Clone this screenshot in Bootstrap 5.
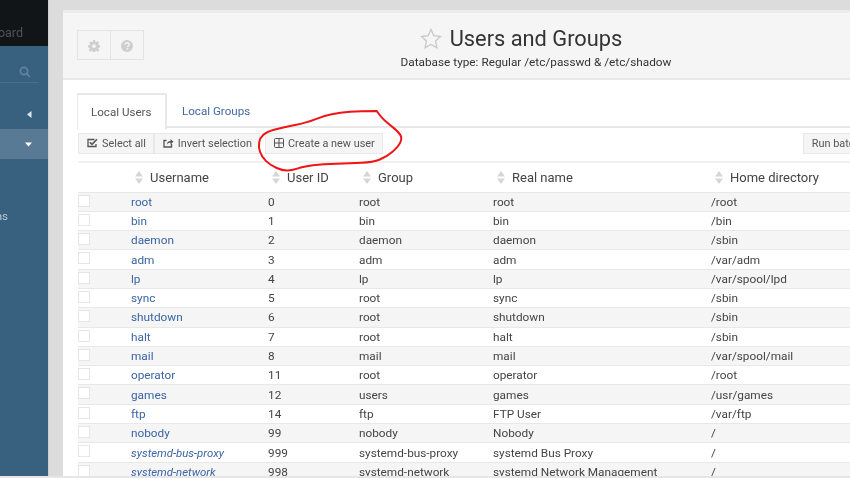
<!DOCTYPE html>
<html lang="en"><head><meta charset="utf-8"><title>Users and Groups</title>
<link rel="stylesheet" href="https://cdn.jsdelivr.net/npm/bootstrap@5.3.0/dist/css/bootstrap.min.css">
<style>
html,body{height:478px;overflow:hidden}
body{background:#dcdcdc;font-family:Roboto,"Liberation Sans",sans-serif;font-size:12px;color:#444;filter:blur(.45px)}
.shell{height:478px;position:relative}
.side{width:48px;flex:none;background:#38607f;box-shadow:1px 0 1px #cfcfcf;overflow:hidden;color:#b9cad8}
.brand{height:46px;background:#111518;color:#4d5359;font-size:12.5px;padding:20px 25px 0 0;white-space:nowrap}
.searchrow{height:37px;margin-right:9px;border-bottom:1px solid #4a7090;padding:16px 8px 0 0}
.sitem{height:30px;padding-right:16px}
.sitem.on{background:#587a95}
.siteml{height:28px;padding-right:40px;font-size:11.5px;white-space:nowrap;margin-top:44px}
.mainwrap{flex:1 1 0;min-width:0;padding:10px 0 0 15px}
.panel{background:#fff;height:468px;border-top:3px solid #ececec;overflow:hidden}
.phead{height:67px;background:#f5f5f5;border-bottom:2px solid #e8e8e8}
.tools{margin:17px 0 0 14px;height:30px}
.tools .btn{width:34px;height:30px;background:#f5f5f5;border:1px solid #e3e3e3;border-radius:0;padding:0;line-height:1}
.titlebox{flex:none;width:784px}
.ttl{font-size:21.8px;font-weight:400;line-height:28px;color:#333;margin:12px 0 0}
.subt{font-size:11.8px;line-height:14px;color:#333;margin-top:2px}
.ttl svg{margin:0 8px 0 -30px;vertical-align:-3px}
.pbody{padding:13px 0 0 14px;width:787px;overflow:hidden}
.nav-tabs{--bs-nav-tabs-border-color:#e8e8e8;--bs-nav-tabs-border-radius:0;border-bottom-width:2px;height:35px;width:780px;font-size:11.6px}
.nav-tabs .nav-link{padding:0 14px;height:36px;line-height:35px;color:#3f68a5;border-width:1px;white-space:nowrap}
.nav-tabs .nav-link.active{color:#555;border-color:#e8e8e8 #e8e8e8 #fff;border-width:2px 2px 0 1px;padding:0 0 0 13px;width:90px}
.bar{margin:5px 0 0 1px;height:21px;white-space:nowrap}
.bar .btn{height:21px;font-size:10.9px;line-height:20px;padding:0 7px 0 8px;color:#555;background:#f5f5f5;border:1px solid #e8e8e8;border-radius:0;flex:none}
.bar .btn svg{margin-right:4px;vertical-align:-1px}
.gapc{margin-left:5px}
.farb{margin-left:420px}
.tablewrap{margin:7px 0 0 1px;border-top:2px solid #f0f0f0}
table.utable{table-layout:fixed;width:772px;margin:0;font-size:11.8px;color:#444;--bs-table-bg:transparent;border-collapse:collapse}
.utable th{font-weight:400;font-size:13px;height:29px;padding:0 0 0 8px;color:#444;border:0;border-bottom:1px solid #e8e8e8;vertical-align:middle}
.utable th svg{margin-right:7px;vertical-align:-2px}
.utable td{height:19.3px;padding:0 0 0 4px;line-height:18px;border:0;border-bottom:1px solid #e8e8e8;vertical-align:middle;white-space:nowrap;color:#444;box-shadow:none}
.utable tbody tr:nth-child(odd) td{background:#f5f5f5}
.utable td:first-child{padding:0;vertical-align:top}
.utable a{color:#3a64a6;text-decoration:none}
.utable i{font-size:11.4px}
.cbx.form-check-input{width:12px;height:12px;margin:2px 0 0;border:1px solid #e6e6e6;border-radius:0;display:block;float:none}
.scribble{position:absolute;left:0;top:0;pointer-events:none}
.foot{position:absolute;left:0;right:0;bottom:0;height:2px;background:#e6e6e6}
</style></head><body>
<div class="shell d-flex">
  <aside class="side d-flex flex-column">
    <div class="brand d-flex align-items-center justify-content-end flex-shrink-0"><span class="flex-shrink-0">Dashboard</span></div>
    <div class="searchrow d-flex align-items-center justify-content-end flex-shrink-0">
      <svg width="12" height="12" viewBox="0 0 12 12" fill="none" stroke="#5f83a0" stroke-width="1.7"><circle cx="5" cy="5" r="3.6"/><path d="M7.800 7.800 11 11"/></svg>
    </div>
    <div class="sitem d-flex align-items-center justify-content-end flex-shrink-0 mt-3"><svg width="5" height="7" viewBox="0 0 5 7"><path d="M4.500 0v7L0 3.500z" fill="#dfe7ee"/></svg></div>
    <div class="sitem on d-flex align-items-center justify-content-end flex-shrink-0"><svg width="7" height="5" viewBox="0 0 7 5"><path d="M0 .5h7L3.500 4.500z" fill="#fff"/></svg></div>
    <div class="siteml d-flex align-items-center justify-content-end flex-shrink-0"><span class="flex-shrink-0">Webmin Actions</span></div>
  </aside>
  <main class="mainwrap">
    <div class="panel">
      <div class="phead d-flex">
        <div class="tools btn-group flex-shrink-0">
          <button class="btn" type="button" aria-label="Settings"><svg width="12" height="12" viewBox="0 0 16 16" fill="#cfcfcf"><path fill-rule="evenodd" d="M6.600 0h2.800l.4 2.200 1.300.6 1.900-1.300 2 2-1.300 1.900.6 1.300 2.200.4v2.800l-2.200.4-.6 1.300 1.300 1.900-2 2-1.900-1.300-1.300.6-.4 2.200H6.600l-.4-2.200-1.300-.6L3 15.500l-2-2 1.300-1.900-.6-1.300L0 9.900V7.100l2.200-.4.6-1.300L1.500 3.500l2-2 1.900 1.300 1.300-.6zM8 5.500a2.500 2.500 0 1 0 0 5 2.500 2.500 0 0 0 0-5z"/></svg></button>
          <button class="btn" type="button" aria-label="Help"><svg width="12" height="12" viewBox="0 0 16 16"><circle cx="8" cy="8" r="8" fill="#cfcfcf"/><path d="M5.300 6.200C5.400 4.500 6.500 3.700 8 3.700c1.600 0 2.800.9 2.800 2.300 0 2-2.300 2-2.300 3.700" fill="none" stroke="#f5f5f5" stroke-width="1.800"/><rect x="7.500" y="10.800" width="2" height="2" fill="#f5f5f5"/></svg></button>
        </div>
        <div class="text-center titlebox">
          <h1 class="ttl"><svg width="22" height="21" viewBox="0 0 22 21" fill="none" stroke="#c8c8c8" stroke-width="1.300"><path d="M11 1.500l2.900 6.200 6.600.8-4.900 4.600 1.300 6.700-5.900-3.300-5.900 3.300 1.300-6.700L1.500 8.500l6.600-.8z"/></svg>Users and Groups</h1>
          <div class="subt">Database type: Regular /etc/passwd &amp; /etc/shadow</div>
        </div>
      </div>
      <div class="pbody">
        <ul class="nav nav-tabs">
          <li class="nav-item"><a class="nav-link active" href="#">Local Users</a></li>
          <li class="nav-item"><a class="nav-link" href="#">Local Groups</a></li>
        </ul>
        <div class="bar d-flex">
          <button class="btn" type="button"><svg width="11" height="10" viewBox="0 0 11 10" fill="none" stroke="#555" stroke-width="1.300"><path d="M9 6v2.500H1v-7h6.500"/><path d="M2.800 4.200 5 6.400 10 1.200" stroke-width="1.600"/></svg>Select all</button>
          <button class="btn" type="button"><svg width="11" height="10" viewBox="0 0 11 10" fill="none" stroke="#555" stroke-width="1.300"><path d="M8.500 6v3H1V2.500h2.500"/><path d="M4 6.500C4 4 5.500 3 7.500 3V1l3 2.800-3 2.700V4.800C6 4.800 5 5.200 4 6.500z" fill="#555" stroke="none"/></svg>Invert selection</button>
          <button class="btn gapc" type="button"><svg width="10" height="10" viewBox="0 0 10 10" fill="none" stroke="#555"><rect x=".5" y=".5" width="9" height="9" rx="1"/><path d="M5 .5v9M.5 5h9"/></svg>Create a new user</button>
          <button class="btn farb" type="button">Run batch file</button>
        </div>
        <div class="tablewrap">
          <table class="table utable">
            <colgroup><col style="width:49px"><col style="width:137px"><col style="width:91px"><col style="width:134px"><col style="width:218px"><col style="width:143px"></colgroup>
            <thead><tr>
              <th></th>
              <th><svg width="8" height="13" viewBox="0 0 8 13" fill="#d6d6d6"><path d="M4 0l4 5.500H0zM4 13l4-5.500H0z"/></svg>Username</th>
              <th><svg width="8" height="13" viewBox="0 0 8 13" fill="#d6d6d6"><path d="M4 0l4 5.500H0zM4 13l4-5.500H0z"/></svg>User ID</th>
              <th><svg width="8" height="13" viewBox="0 0 8 13" fill="#d6d6d6"><path d="M4 0l4 5.500H0zM4 13l4-5.500H0z"/></svg>Group</th>
              <th><svg width="8" height="13" viewBox="0 0 8 13" fill="#d6d6d6"><path d="M4 0l4 5.500H0zM4 13l4-5.500H0z"/></svg>Real name</th>
              <th><svg width="8" height="13" viewBox="0 0 8 13" fill="#d6d6d6"><path d="M4 0l4 5.500H0zM4 13l4-5.500H0z"/></svg>Home directory</th>
            </tr></thead>
            <tbody>
              <tr><td><input class="form-check-input cbx" type="checkbox" aria-label="root"></td><td><a href="#">root</a></td><td>0</td><td>root</td><td>root</td><td>/root</td></tr>
              <tr><td><input class="form-check-input cbx" type="checkbox" aria-label="bin"></td><td><a href="#">bin</a></td><td>1</td><td>bin</td><td>bin</td><td>/bin</td></tr>
              <tr><td><input class="form-check-input cbx" type="checkbox" aria-label="daemon"></td><td><a href="#">daemon</a></td><td>2</td><td>daemon</td><td>daemon</td><td>/sbin</td></tr>
              <tr><td><input class="form-check-input cbx" type="checkbox" aria-label="adm"></td><td><a href="#">adm</a></td><td>3</td><td>adm</td><td>adm</td><td>/var/adm</td></tr>
              <tr><td><input class="form-check-input cbx" type="checkbox" aria-label="lp"></td><td><a href="#">lp</a></td><td>4</td><td>lp</td><td>lp</td><td>/var/spool/lpd</td></tr>
              <tr><td><input class="form-check-input cbx" type="checkbox" aria-label="sync"></td><td><a href="#">sync</a></td><td>5</td><td>root</td><td>sync</td><td>/sbin</td></tr>
              <tr><td><input class="form-check-input cbx" type="checkbox" aria-label="shutdown"></td><td><a href="#">shutdown</a></td><td>6</td><td>root</td><td>shutdown</td><td>/sbin</td></tr>
              <tr><td><input class="form-check-input cbx" type="checkbox" aria-label="halt"></td><td><a href="#">halt</a></td><td>7</td><td>root</td><td>halt</td><td>/sbin</td></tr>
              <tr><td><input class="form-check-input cbx" type="checkbox" aria-label="mail"></td><td><a href="#">mail</a></td><td>8</td><td>mail</td><td>mail</td><td>/var/spool/mail</td></tr>
              <tr><td><input class="form-check-input cbx" type="checkbox" aria-label="operator"></td><td><a href="#">operator</a></td><td>11</td><td>root</td><td>operator</td><td>/root</td></tr>
              <tr><td><input class="form-check-input cbx" type="checkbox" aria-label="games"></td><td><a href="#">games</a></td><td>12</td><td>users</td><td>games</td><td>/usr/games</td></tr>
              <tr><td><input class="form-check-input cbx" type="checkbox" aria-label="ftp"></td><td><a href="#">ftp</a></td><td>14</td><td>ftp</td><td>FTP User</td><td>/var/ftp</td></tr>
              <tr><td><input class="form-check-input cbx" type="checkbox" aria-label="nobody"></td><td><a href="#">nobody</a></td><td>99</td><td>nobody</td><td>Nobody</td><td>/</td></tr>
              <tr><td><input class="form-check-input cbx" type="checkbox" aria-label="systemd-bus-proxy"></td><td><a href="#"><i>systemd-bus-proxy</i></a></td><td>999</td><td>systemd-bus-proxy</td><td>systemd Bus Proxy</td><td>/</td></tr>
              <tr><td><input class="form-check-input cbx" type="checkbox" aria-label="systemd-network"></td><td><a href="#"><i>systemd-network</i></a></td><td>998</td><td>systemd-network</td><td>systemd Network Management</td><td>/</td></tr>
            </tbody>
          </table>
        </div>
      </div>
    </div>
  </main>
  <svg class="scribble" width="850" height="478" viewBox="0 0 850 478" fill="none" stroke="#f01414" stroke-width="2" stroke-linejoin="round" stroke-linecap="round"><path d="M376.700 111Q360 111 350 111.850Q340 112.700 331.650 114.350Q323.300 116 315 119.350Q306.700 122.700 295 125Q283.300 127.300 275 129.500Q266.700 131.700 263.350 134.850Q260 138 259.150 142.350Q258.300 146.700 260 151.700Q261.700 156.700 265.850 160.850Q270 165 276.650 168Q283.300 171 288.150 170.500Q293 170 298 168.350Q303 166.700 313 165.350Q323 164 336.500 163.650Q350 163.300 361.500 162.800Q373 162.300 379.850 159.500Q386.700 156.700 392.500 151.700Q398.300 146.700 400.300 142.350Q402.300 138 400.300 134.850Q398.300 131.700 394.150 128.350Q390 125 385.850 121.500Q381.700 118 376.700 111"/></svg>
  <div class="foot"></div>
</div>
<script src="https://cdn.jsdelivr.net/npm/bootstrap@5.3.0/dist/js/bootstrap.bundle.min.js"></script>
</body></html>
